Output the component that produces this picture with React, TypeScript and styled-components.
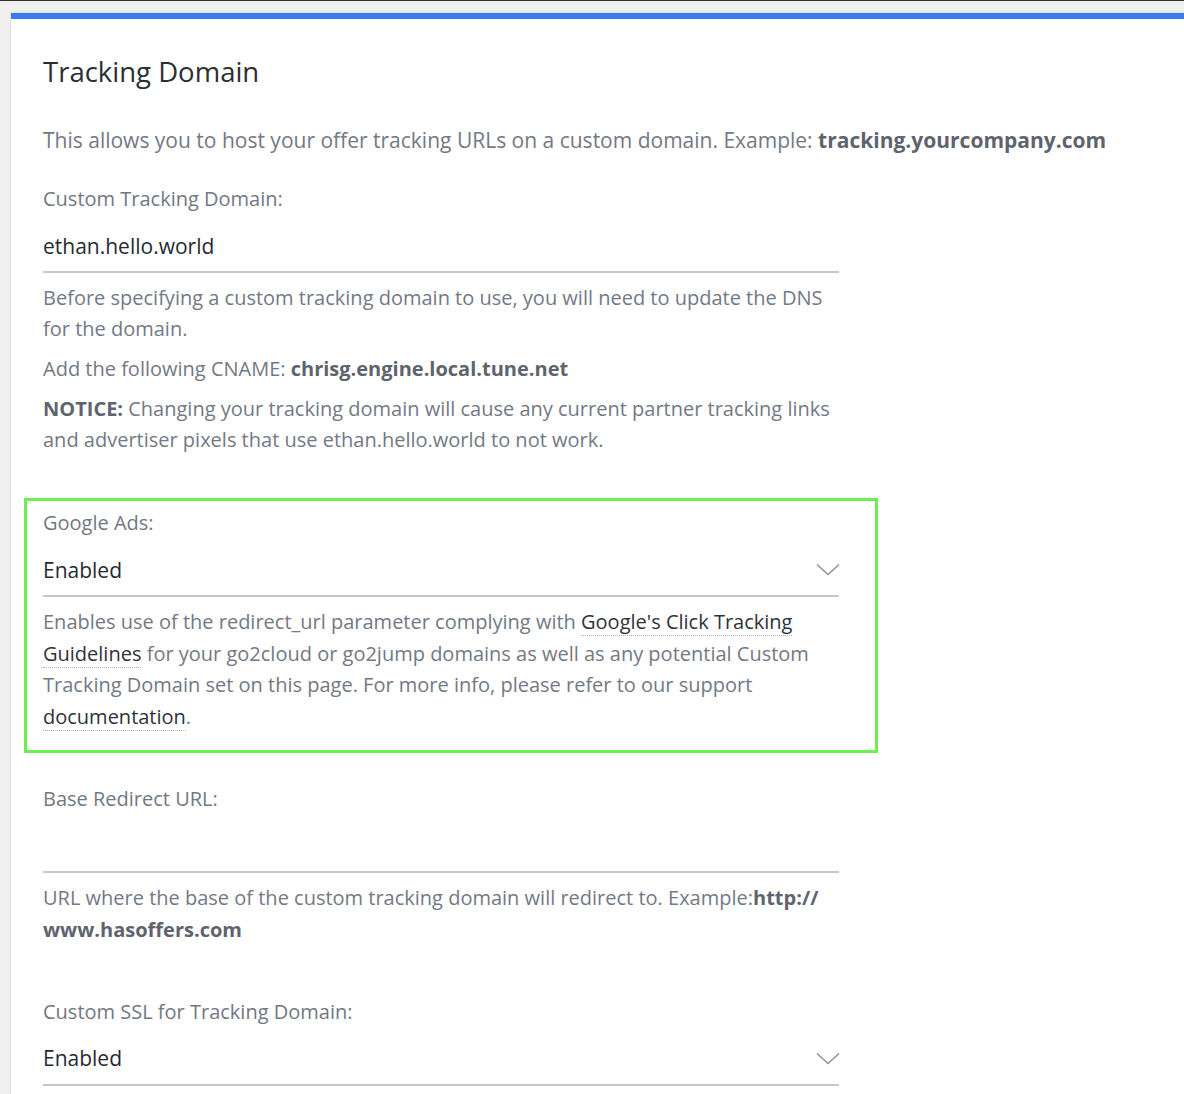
import React from "react";
import styled, { createGlobalStyle } from "styled-components";

const GlobalStyle = createGlobalStyle`
  html, body {
    margin: 0;
    padding: 0;
    background: #f0f0f1;
    font-family: "Open Sans", "Noto Sans", "Liberation Sans", sans-serif;
  }
  body {
    border-top: 1px solid #303236;
  }
`;

const Page = styled.div`
  padding: 12px 0 0 11px;
  height: 1093px;
  box-sizing: border-box;
  overflow: hidden;
`;

const Panel = styled.section`
  background: #ffffff;
  border-top: 6px solid #3b7cf4;
  box-shadow: 0 0 2px rgba(0, 0, 0, 0.18);
  padding: 37px 0 40px 32px;
  min-height: 1100px;
  display: flex;
  flex-direction: column;
  align-items: flex-start;
`;

const Title = styled.h2`
  margin: 0;
  font-size: 27.5px;
  line-height: 32px;
  font-weight: 400;
  color: #2b2e33;
`;

const Intro = styled.p`
  margin: 37px 0 0;
  font-size: 21px;
  line-height: 31px;
  color: #737985;
  white-space: nowrap;
`;

const Strong = styled.b`
  font-weight: 700;
  color: #5e646e;
`;

const Field = styled.div<{ $top: number }>`
  margin-top: ${(p) => p.$top}px;
  width: 796px;
`;

const Label = styled.div`
  font-size: 20px;
  line-height: 31px;
  color: #727883;
`;

const Control = styled.div`
  display: flex;
  align-items: center;
  justify-content: space-between;
  height: 31px;
  padding: 16px 0 10px;
  border-bottom: 2px solid #c3c6cc;
  font-size: 21px;
  color: #272a30;
`;

const Chevron = styled.svg`
  width: 24px;
  height: 13px;
  margin-right: -1px;
`;

const Help = styled.div<{ $line: number }>`
  margin-top: 9px;
  font-size: 20px;
  line-height: ${(p) => p.$line}px;
  color: #737985;

  p {
    margin: 0;
  }
  p + p {
    margin-top: 9px;
  }
`;

const Link = styled.a`
  color: #2f333a;
  text-decoration: none;
  border-bottom: 1px dotted #a9adb4;
`;

const Highlight = styled.div`
  margin: 43px 0 0 -19px;
  padding: 6px 36px 17px 16px;
  border: 3px solid #6cef4f;
`;

const ChevronDown = () => (
  <Chevron viewBox="0 0 24 13" fill="none">
    <path d="M1 1.5 L12 11.5 L23 1.5" stroke="#8d929a" strokeWidth="1.4" />
  </Chevron>
);

const App = () => {
  const domain = "ethan.hello.world";

  return (
    <>
      <GlobalStyle />
      <Page>
        <Panel>
          <Title>Tracking Domain</Title>
          <Intro>
            This allows you to host your offer tracking URLs on a custom domain. Example:{" "}
            <Strong>tracking.yourcompany.com</Strong>
          </Intro>

          <Field $top={27}>
            <Label>Custom Tracking Domain:</Label>
            <Control>{domain}</Control>
            <Help $line={31}>
              <p>
                Before specifying a custom tracking domain to use, you will need to update the DNS
                for the domain.
              </p>
              <p>
                Add the following CNAME: <Strong>chrisg.engine.local.tune.net</Strong>
              </p>
              <p>
                <Strong>NOTICE:</Strong> Changing your tracking domain will cause any current
                partner tracking links and advertiser pixels that use {domain} to not work.
              </p>
            </Help>
          </Field>

          <Highlight>
            <Field $top={0}>
              <Label>Google Ads:</Label>
              <Control>
                Enabled
                <ChevronDown />
              </Control>
              <Help $line={31.7}>
                <p>
                  Enables use of the redirect_url parameter complying with{" "}
                  <Link>Google's Click Tracking Guidelines</Link> for your go2cloud or go2jump
                  domains as well as any potential Custom Tracking Domain set on this page. For
                  more info, please refer to our support <Link>documentation</Link>.
                </p>
              </Help>
            </Field>
          </Highlight>

          <Field $top={30}>
            <Label>Base Redirect URL:</Label>
            <Control />
            <Help $line={32}>
              <p>
                URL where the base of the custom tracking domain will redirect to. Example:
                <Strong>
                  http://
                  <wbr />
                  www.hasoffers.com
                </Strong>
              </p>
            </Help>
          </Field>

          <Field $top={50}>
            <Label>Custom SSL for Tracking Domain:</Label>
            <Control>
              Enabled
              <ChevronDown />
            </Control>
          </Field>
        </Panel>
      </Page>
    </>
  );
};

export default App;
